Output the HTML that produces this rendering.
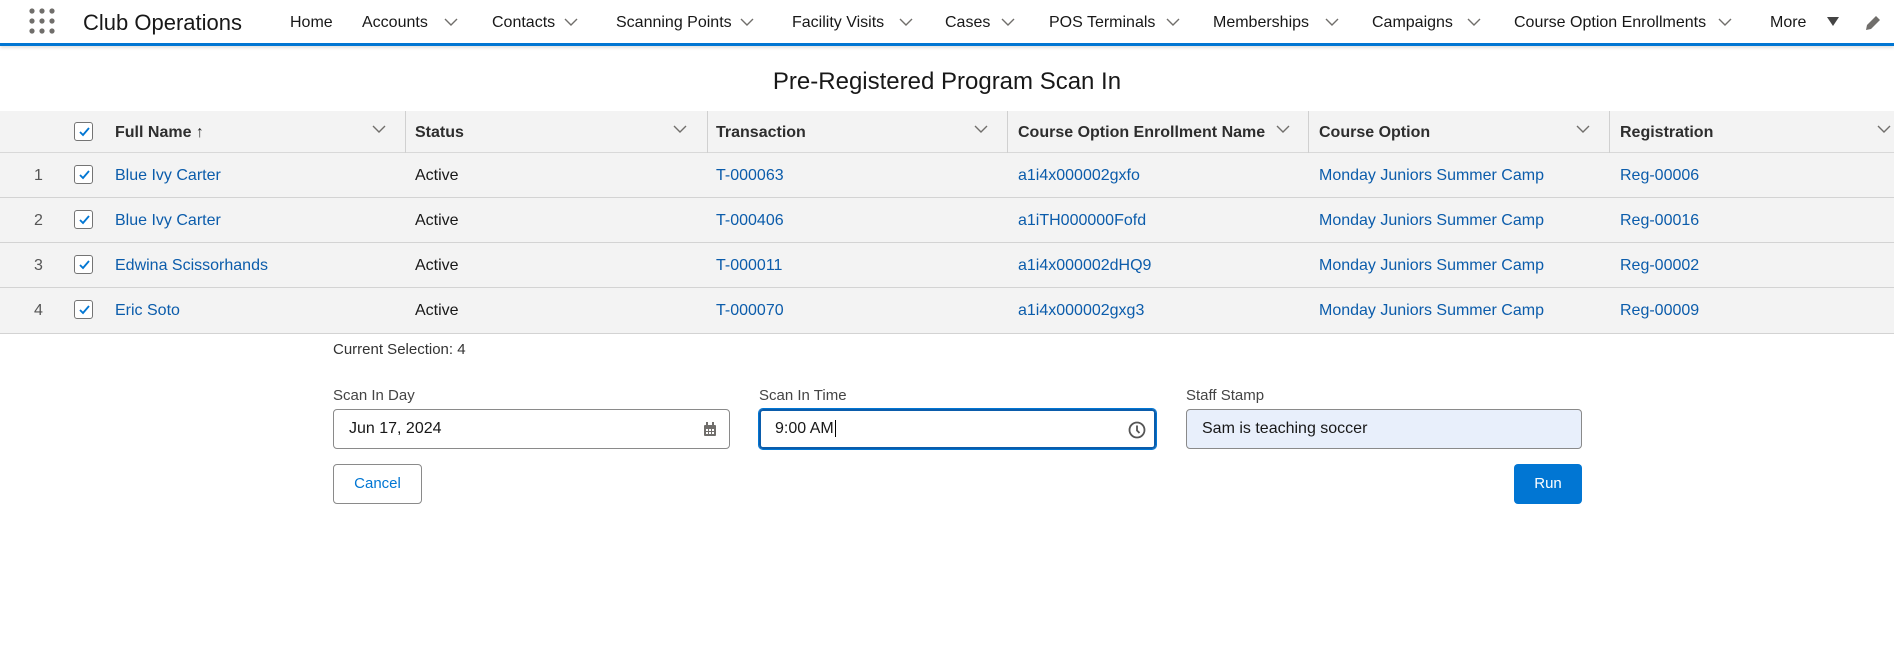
<!DOCTYPE html>
<html><head><style>
*{box-sizing:border-box;margin:0;padding:0}
body{width:1894px;height:664px;background:#fff;font-family:"Liberation Sans",sans-serif;font-size:15px;color:#181818;position:relative;overflow:hidden}
.a{position:absolute;white-space:nowrap}
.nav{position:absolute;left:0;top:0;width:1894px;height:46px;border-bottom:3px solid #0176d3;box-shadow:0 2px 3px rgba(0,0,0,.12)}
.ni{position:absolute;top:14px;font-size:16px;color:#181818}
.chev{position:absolute;top:15px;width:10px;height:10px}
.hdr{position:absolute;left:0;top:111px;width:1894px;height:42px;background:#f3f3f3;border-bottom:1px solid #d8d8d8}
.row{position:absolute;left:0;width:1894px;height:45px;background:#f3f3f3;border-bottom:1px solid #d3d3d3}
.sep{position:absolute;top:0;width:1px;height:42px;background:#d0d0d0}
.hb{position:absolute;top:13px;font-weight:bold;font-size:16px;color:#2e2e2e}
.c{position:absolute;top:14px;font-size:16px}
.l{color:#0b5cab}
.cb{position:absolute;width:19px;height:19px;border:1px solid #747474;border-radius:3px;background:#fff}
.cb svg{position:absolute;left:3px;top:3px}
.inp{position:absolute;top:409px;height:40px;border:1px solid #8a8a8a;border-radius:4px;font-size:16px;padding:10px 15px}
.lab{position:absolute;top:387px;font-size:15px;color:#444}
</style></head><body>
<div class="nav">
<svg class="a" style="left:29px;top:8px" width="27" height="26"><g fill="#706e6b"><circle cx="3" cy="3" r="2.6"/><circle cx="13" cy="3" r="2.6"/><circle cx="23" cy="3" r="2.6"/><circle cx="3" cy="13" r="2.6"/><circle cx="13" cy="13" r="2.6"/><circle cx="23" cy="13" r="2.6"/><circle cx="3" cy="23" r="2.6"/><circle cx="13" cy="23" r="2.6"/><circle cx="23" cy="23" r="2.6"/></g></svg>
<div class="a" style="left:83px;top:10px;font-size:22px;color:#181818">Club Operations</div>
<div class="ni" style="left:290px">Home</div>
<div class="ni" style="left:362px">Accounts</div>
<div class="ni" style="left:492px">Contacts</div>
<div class="ni" style="left:616px">Scanning Points</div>
<div class="ni" style="left:792px">Facility Visits</div>
<div class="ni" style="left:945px">Cases</div>
<div class="ni" style="left:1049px">POS Terminals</div>
<div class="ni" style="left:1213px">Memberships</div>
<div class="ni" style="left:1372px">Campaigns</div>
<div class="ni" style="left:1514px">Course Option Enrollments</div>
<div class="ni" style="left:1770px">More</div>
<svg class="a" style="left:1827px;top:17px" width="12" height="9"><path d="M0 0H12L6 9Z" fill="#444"/></svg>
<svg class="a" style="left:1864px;top:14px" width="18" height="18"><path d="M2 16L3 11L12 2L16 6L7 15Z" fill="#706e6b"/></svg>
<svg width="0" height="0"></svg>
</div>
<svg class="a" style="left:0;top:0" width="1894" height="46">
<g fill="none" stroke="#706e6b" stroke-width="1.4">
<path d="M445 19l6 6 6-6M565 19l6 6 6-6M741 19l6 6 6-6M900 19l6 6 6-6M1002 19l6 6 6-6M1167 19l6 6 6-6M1326 19l6 6 6-6M1468 19l6 6 6-6M1719 19l6 6 6-6"/>
</g></svg>
<div class="a" style="left:0;width:1894px;top:68px;text-align:center;font-size:24px;color:#181818">Pre-Registered Program Scan In</div>
<div class="hdr">
<div class="cb" style="left:74px;top:11px"><svg width="12" height="12"><path d="M2 6l3 3 6-7" stroke="#0176d3" stroke-width="1.8" fill="none"/></svg></div>
<div class="hb" style="left:115px">Full Name <span style="font-weight:normal">↑</span></div>
<div class="hb" style="left:415px">Status</div>
<div class="hb" style="left:716px">Transaction</div>
<div class="hb" style="left:1018px">Course Option Enrollment Name</div>
<div class="hb" style="left:1319px">Course Option</div>
<div class="hb" style="left:1620px">Registration</div>
<div class="sep" style="left:405px"></div><div class="sep" style="left:707px"></div><div class="sep" style="left:1007px"></div><div class="sep" style="left:1308px"></div><div class="sep" style="left:1609px"></div>
<svg class="a" style="left:0;top:0" width="1894" height="42"><g fill="none" stroke="#706e6b" stroke-width="1.4"><path d="M373 15l6 6 6-6M674 15l6 6 6-6M975 15l6 6 6-6M1277 15l6 6 6-6M1577 15l6 6 6-6M1878 15l6 6 6-6"/></g></svg>
</div>
<div class="row" style="top:153px">
<div class="c" style="left:34px;color:#555">1</div>
<div class="cb" style="left:74px;top:12px"><svg width="12" height="12"><path d="M2 6l3 3 6-7" stroke="#0176d3" stroke-width="1.8" fill="none"/></svg></div>
<div class="c l" style="left:115px">Blue Ivy Carter</div><div class="c" style="left:415px">Active</div><div class="c l" style="left:716px">T-000063</div><div class="c l" style="left:1018px">a1i4x000002gxfo</div><div class="c l" style="left:1319px">Monday Juniors Summer Camp</div><div class="c l" style="left:1620px">Reg-00006</div>
</div>
<div class="row" style="top:198px">
<div class="c" style="left:34px;color:#555">2</div>
<div class="cb" style="left:74px;top:12px"><svg width="12" height="12"><path d="M2 6l3 3 6-7" stroke="#0176d3" stroke-width="1.8" fill="none"/></svg></div>
<div class="c l" style="left:115px">Blue Ivy Carter</div><div class="c" style="left:415px">Active</div><div class="c l" style="left:716px">T-000406</div><div class="c l" style="left:1018px">a1iTH000000Fofd</div><div class="c l" style="left:1319px">Monday Juniors Summer Camp</div><div class="c l" style="left:1620px">Reg-00016</div>
</div>
<div class="row" style="top:243px">
<div class="c" style="left:34px;color:#555">3</div>
<div class="cb" style="left:74px;top:12px"><svg width="12" height="12"><path d="M2 6l3 3 6-7" stroke="#0176d3" stroke-width="1.8" fill="none"/></svg></div>
<div class="c l" style="left:115px">Edwina Scissorhands</div><div class="c" style="left:415px">Active</div><div class="c l" style="left:716px">T-000011</div><div class="c l" style="left:1018px">a1i4x000002dHQ9</div><div class="c l" style="left:1319px">Monday Juniors Summer Camp</div><div class="c l" style="left:1620px">Reg-00002</div>
</div>
<div class="row" style="top:288px;height:46px">
<div class="c" style="left:34px;color:#555">4</div>
<div class="cb" style="left:74px;top:12px"><svg width="12" height="12"><path d="M2 6l3 3 6-7" stroke="#0176d3" stroke-width="1.8" fill="none"/></svg></div>
<div class="c l" style="left:115px">Eric Soto</div><div class="c" style="left:415px">Active</div><div class="c l" style="left:716px">T-000070</div><div class="c l" style="left:1018px">a1i4x000002gxg3</div><div class="c l" style="left:1319px">Monday Juniors Summer Camp</div><div class="c l" style="left:1620px">Reg-00009</div>
</div>
<div class="a" style="left:333px;top:341px;font-size:15px;color:#333">Current Selection: 4</div>
<div class="lab" style="left:333px">Scan In Day</div>
<div class="lab" style="left:759px">Scan In Time</div>
<div class="lab" style="left:1186px">Staff Stamp</div>
<div class="inp" style="left:333px;width:397px">Jun 17, 2024
<svg class="a" style="right:12px;top:12px" width="14" height="15"><rect x="1" y="3" width="12" height="11" rx="1" fill="#706e6b"/><rect x="3" y="0" width="2" height="4" fill="#706e6b"/><rect x="9" y="0" width="2" height="4" fill="#706e6b"/><g fill="#fff"><rect x="3" y="7" width="2" height="2"/><rect x="6" y="7" width="2" height="2"/><rect x="9" y="7" width="2" height="2"/><rect x="3" y="10" width="2" height="2"/><rect x="6" y="10" width="2" height="2"/><rect x="9" y="10" width="2" height="2"/></g></svg></div>
<div class="inp" style="left:759px;width:397px;border:2px solid #0b5cab;box-shadow:0 0 0 1px #0176d3;padding:9px 14px">9:00 AM<span style="border-left:1px solid #000;margin-left:1px"></span>
<svg class="a" style="right:8px;top:10px" width="18" height="18"><circle cx="9" cy="9" r="7.5" fill="none" stroke="#555" stroke-width="1.8"/><path d="M9 4.5V9.5L11.5 12" stroke="#555" stroke-width="1.8" fill="none"/></svg></div>
<div class="inp" style="left:1186px;width:396px;background:#e8effb">Sam is teaching soccer</div>
<div class="a" style="left:333px;top:464px;width:89px;height:40px;border:1px solid #8a8a8a;border-radius:4px;color:#0176d3;font-size:15px;text-align:center;line-height:38px">Cancel</div>
<div class="a" style="left:1514px;top:464px;width:68px;height:40px;background:#0176d3;border-radius:4px;color:#fff;font-size:15px;text-align:center;line-height:40px">Run</div>
</body></html>
